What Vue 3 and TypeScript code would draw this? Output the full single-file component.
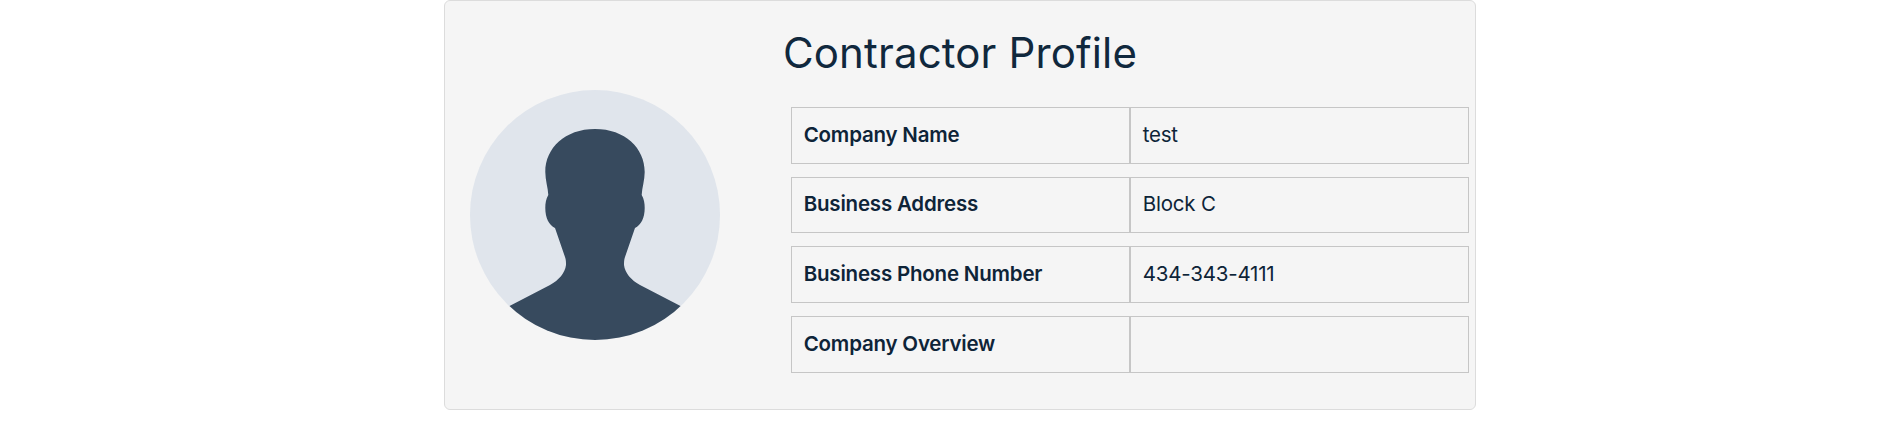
<script setup lang="ts">
const rows: { label: string; value: string }[] = [
  { label: 'Company Name', value: 'test' },
  { label: 'Business Address', value: 'Block C' },
  { label: 'Business Phone Number', value: '434-343-4111' },
  { label: 'Company Overview', value: '' },
]
</script>

<template>
  <div class="page">
    <section class="card">
      <h1 class="title">Contractor Profile</h1>
      <div class="body">
        <div class="avatar-col">
          <svg class="avatar" viewBox="0 0 250 250" width="250" height="250" role="img" aria-label="Profile picture">
            <defs>
              <clipPath id="avatar-clip"><circle cx="125" cy="125" r="125" /></clipPath>
            </defs>
            <circle cx="125" cy="125" r="125" fill="#e0e5ec" />
            <path
              clip-path="url(#avatar-clip)"
              fill="#374a5e"
              d="M125 39 C95 39 75.3 58 75.3 82 C75.3 90 78 98 78.3 105 C76 109 75.3 113 75.3 118 C75.3 128 79 135 85 138 L95 167 C96 170 96 172 96 175 C95 183 89 190 80 195 L40 215.7 L0 236 V250 H250 V236 L210 215.7 L170 195 C161 190 155 183 154 175 C154 172 154 170 155 167 L165 138 C171 135 174.7 128 174.7 118 C174.7 113 174 109 171.7 105 C172 98 174.7 90 174.7 82 C174.7 58 155 39 125 39 Z"
            />
          </svg>
        </div>
        <div class="rows">
          <div v-for="row in rows" :key="row.label" class="row">
            <div class="cell label">{{ row.label }}</div>
            <div class="cell value">{{ row.value }}</div>
          </div>
        </div>
      </div>
    </section>
  </div>
</template>

<style scoped>
.page {
  padding-left: 444px;
  font-family: "Inter", "Liberation Sans", sans-serif;
  color: #0e2438;
}
.card {
  box-sizing: border-box;
  width: 1032px;
  height: 410px;
  background: #f5f5f5;
  border: 1.5px solid #dcdcdc;
  border-radius: 6px;
}
.title {
  margin: 0;
  padding-top: 28px;
  height: 89px;
  box-sizing: border-box;
  text-align: center;
  font-size: 42px;
  line-height: 48px;
  font-weight: 400;
  letter-spacing: 0.15px;
  color: #10283d;
}
.body {
  display: flex;
  padding-left: 25px;
}
.avatar-col {
  width: 320.7px;
  flex: none;
}
.avatar {
  display: block;
}
.rows {
  display: flex;
  flex-direction: column;
  gap: 13px;
  padding-top: 17px;
}
.row {
  display: grid;
  grid-template-columns: 339px 339px;
  height: 56.67px;
}
.cell {
  box-sizing: border-box;
  border: 1.5px solid #c6c6c6;
  padding-left: 12px;
  display: flex;
  align-items: center;
  padding-bottom: 2px;
  font-size: 20.5px;
  letter-spacing: -0.2px;
}
.label {
  font-weight: 600;
}
</style>
